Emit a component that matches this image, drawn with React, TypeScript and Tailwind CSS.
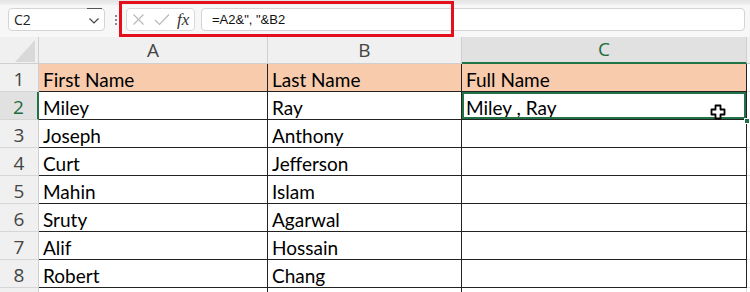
import React from "react";

const rows: [string, string, string][] = [
  ["First Name", "Last Name", "Full Name"],
  ["Miley", "Ray", "Miley , Ray"],
  ["Joseph", "Anthony", ""],
  ["Curt", "Jefferson", ""],
  ["Mahin", "Islam", ""],
  ["Sruty", "Agarwal", ""],
  ["Alif", "Hossain", ""],
  ["Robert", "Chang", ""],
];

const dataFont = { fontFamily: "Lato, 'Liberation Sans', sans-serif" };
const uiFont = { fontFamily: "'Open Sans', 'Noto Sans', sans-serif" };

function Cursor() {
  return (
    <svg width="16" height="16" viewBox="0 0 16 16" className="absolute left-[248px] top-[12px]">
      <path
        d="M5.5 1.5 H10.5 V5.5 H14.5 V10.5 H10.5 V14.5 H5.5 V10.5 H1.5 V5.5 H5.5 Z"
        fill="white"
        stroke="black"
        strokeWidth="1.8"
        strokeLinejoin="round"
      />
    </svg>
  );
}

export default function App() {
  return (
    <div className="relative w-[750px] h-[292px] bg-white overflow-hidden leading-none">
      {/* Formula bar */}
      <div className="h-[37px] bg-[#f7f7f7] flex flex-col">
        <div className="h-[5px] bg-gradient-to-b from-[#e4e4e4] to-[#f0f0f0]" />
        <div className="flex items-start pt-[3px]">
          <div className="relative ml-[8px] w-[97px] h-[23px] bg-white border border-[#d4d4d4] rounded-[4px] flex items-center">
            <span className="pl-[5px] text-[14px] text-[#222]" style={uiFont}>C2</span>
            <div className="absolute right-[2px] top-[-1px] w-[15px] h-[1px] bg-[#555]" />
            <svg width="12" height="8" viewBox="0 0 12 8" className="absolute right-[4px] top-[8px]">
              <path d="M1.5 1.5 L6 6 L10.5 1.5" fill="none" stroke="#444" strokeWidth="1.2" />
            </svg>
          </div>
          <div className="w-[21px] h-[23px] flex flex-col items-center justify-center gap-[2px]">
            <div className="w-[2px] h-[2px] bg-[#8a8a8a]" />
            <div className="w-[2px] h-[2px] bg-[#8a8a8a]" />
            <div className="w-[2px] h-[2px] bg-[#8a8a8a]" />
          </div>
          <div className="w-[69px] h-[23px] bg-white border border-[#d8d8d8] rounded-[4px] flex items-center pl-[5px]">
            <svg width="13" height="13" viewBox="0 0 13 13">
              <path d="M1.5 1.5 L11.5 11.5 M11.5 1.5 L1.5 11.5" stroke="#b8b8b8" strokeWidth="1.1" />
            </svg>
            <svg width="16" height="13" viewBox="0 0 16 13" className="ml-[9px]">
              <path d="M1 7 L5.5 11.5 L15 1.5" fill="none" stroke="#b8b8b8" strokeWidth="1.1" />
            </svg>
            <span
              className="ml-[7px] text-[17px] italic leading-none text-[#333]"
              style={{ fontFamily: "'Liberation Serif', 'DejaVu Serif', serif" }}
            >
              fx
            </span>
          </div>
          <div className="ml-[6px] mr-[5px] flex-1 h-[23px] bg-white border border-[#d4d4d4] rounded-[4px] flex items-center pl-[10px]">
            <span className="text-[13px] text-[#111]" style={{ fontFamily: "'Liberation Sans', sans-serif" }}>
              =A2&amp;", "&amp;B2
            </span>
          </div>
        </div>
      </div>

      {/* Column headers */}
      <div className="grid grid-cols-[39px_229px_194px_285px_3px] h-[27px] bg-[#f0f0f0]" style={uiFont}>
        <div className="relative border-r border-b border-[#cfcfcf]">
          <svg width="21" height="22" viewBox="0 0 21 22" className="absolute left-[15px] top-[3px]">
            <polygon points="20,0 20,22 0,22" fill="#d9d9d9" />
          </svg>
        </div>
        <div className="border-r border-b border-[#cfcfcf] flex items-center justify-center text-[19px] leading-none text-[#444]">A</div>
        <div className="border-r border-b border-[#cfcfcf] flex items-center justify-center text-[19px] leading-none text-[#444]">B</div>
        <div className="bg-[#e1e1e1] border-r border-r-[#cfcfcf] border-b-2 border-b-[#217346] flex items-center justify-center text-[19px] leading-none text-[#1e6b40]">C</div>
        <div className="border-b border-[#cfcfcf]" />
      </div>

      {/* Rows */}
      {rows.map((r, i) => {
        const isHeader = i === 0;
        const isSel = i === 1;
        return (
          <div key={i} className="grid grid-cols-[39px_229px_194px_285px_3px] h-[28px] overflow-hidden">
            <div
              className={
                "flex items-center justify-center pt-[4px] text-[19px] leading-none border-b border-b-[#d6d6d6] " +
                (isSel
                  ? "bg-[#e1e1e1] text-[#1e6b40] border-r-2 border-r-[#217346]"
                  : "bg-[#f0f0f0] text-[#444] border-r border-r-[#cfcfcf]")
              }
              style={uiFont}
            >
              {i + 1}
            </div>
            {r.map((c, j) => (
              <div
                key={j}
                className={
                  "relative flex items-end pl-[4px] text-[19px] leading-none text-black border-b border-r border-[#222] " +
                  (isHeader ? "bg-[#f8cbad]" : "bg-white")
                }
                style={dataFont}
              >
                <span className="leading-[23px]">{c}</span>
                {isSel && j === 2 && (
                  <>
                    <div className="absolute inset-0 border-2 border-[#217346]" />
                    <Cursor />
                  </>
                )}
              </div>
            ))}
            <div className="bg-white border-b border-[#e0e0e0]" />
          </div>
        );
      })}
      <div className="grid grid-cols-[39px_229px_194px_285px_3px] h-[10px]">
        <div className="bg-[#f0f0f0] border-r border-[#cfcfcf]" />
        <div className="border-r border-[#222]" />
        <div className="border-r border-[#222]" />
        <div className="border-r border-[#e0e0e0]" />
        <div />
      </div>

      {/* Fill handle of the selected cell */}
      <div className="absolute left-[744px] top-[118px] w-[6px] h-[6px] bg-[#217346] border border-white" />

      {/* Red highlight box */}
      <div className="absolute left-[119px] top-[1px] w-[335px] h-[36px] border-[3px] border-[#e3101b]" />
    </div>
  );
}
